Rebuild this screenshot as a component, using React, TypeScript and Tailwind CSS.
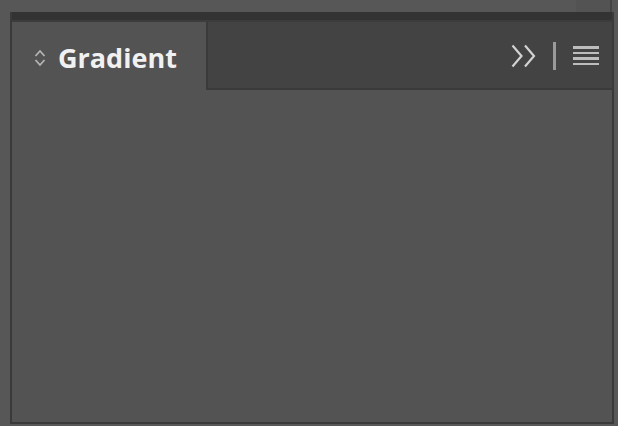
import React from "react";

const Chevrons = () => (
  <svg width="26" height="24" viewBox="0 0 26 24" fill="none">
    <path d="M1.5 1.5 L10.5 12 L1.5 22.5" stroke="#d2d2d2" strokeWidth="2.2" />
    <path d="M14 1.5 L23 12 L14 22.5" stroke="#d2d2d2" strokeWidth="2.2" />
  </svg>
);

const UpDown = () => (
  <svg width="12" height="18" viewBox="0 0 12 18" fill="none">
    <path d="M1.5 7 L6 2 L10.5 7" stroke="#b4b4b4" strokeWidth="1.8" />
    <path d="M1.5 11 L6 16 L10.5 11" stroke="#b4b4b4" strokeWidth="1.8" />
  </svg>
);

const Menu = () => (
  <div className="flex flex-col gap-[3px] w-[26px]">
    <div className="h-[2.5px] bg-[#bdbdbd]" />
    <div className="h-[2.5px] bg-[#bdbdbd]" />
    <div className="h-[2.5px] bg-[#bdbdbd]" />
    <div className="h-[2.5px] bg-[#bdbdbd]" />
  </div>
);

const App = () => {
  return (
    <div
      className="w-[618px] h-[426px] bg-[#575757] flex flex-col overflow-hidden"
      style={{ fontFamily: '"Open Sans", "DejaVu Sans", sans-serif' }}
    >
      <div className="h-[12px] flex shrink-0">
        <div className="flex-1" />
        <div className="w-[34px] bg-[#535353]" />
        <div className="w-[2px] bg-[#444444]" />
        <div className="w-[6px]" />
      </div>
      <div className="flex-1 ml-[10px] mr-[4px] mb-[2px] flex flex-col border-l-2 border-r-2 border-b-2 border-[#3a3a3a] bg-[#535353]">
        <div className="h-[8px] bg-[#333333] shrink-0" />
        <div className="h-[2px] bg-[#3c3c3c] shrink-0" />
        <div className="h-[68px] flex shrink-0">
          <div className="w-[196px] bg-[#535353] border-r-2 border-[#3a3a3a] flex items-center pl-[22px] pt-[3px]">
            <UpDown />
            <span className="ml-[12px] text-[27px] font-bold text-[#f1f1f1] leading-none">
              Gradient
            </span>
          </div>
          <div className="flex-1 bg-[#434343] border-b-2 border-[#3a3a3a] flex items-center justify-end pr-[13px] pt-[1px]">
            <Chevrons />
            <div className="w-[3px] h-[28px] bg-[#9a9a9a] ml-[16px] mr-[17px]" />
            <Menu />
          </div>
        </div>
        <div className="flex-1" />
      </div>
    </div>
  );
};

export default App;
